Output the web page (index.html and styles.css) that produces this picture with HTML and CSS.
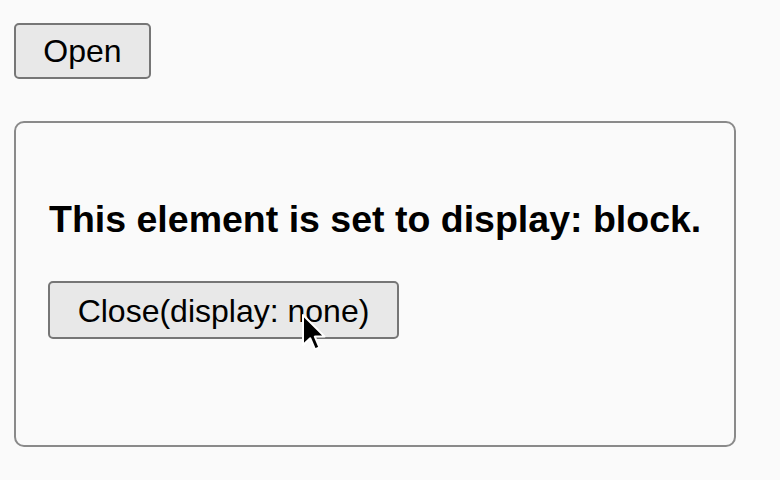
FILE: index.html
```html
<!DOCTYPE html>
<html lang="en">
<head>
<meta charset="utf-8">
<title>Display demo</title>
<link rel="stylesheet" href="styles.css">
</head>
<body>
<div class="page">
  <div class="toolbar">
    <button class="btn btn-open" type="button">Open</button>
  </div>
  <div class="panel">
    <h3 class="panel-title">This element is set to display: block.</h3>
    <button class="btn btn-close" type="button">Close(display: none)</button>
  </div>
</div>
<svg class="cursor" width="26" height="40" viewBox="0 0 13 20" aria-hidden="true">
  <path d="M1 1 L1 16 L4.6 12.6 L7 18.2 L9.2 17.2 L6.9 11.8 L11.8 11.8 Z" fill="#000" stroke="#fff" stroke-width="1" stroke-linejoin="round"/>
</svg>
</body>
</html>
```
FILE: styles.css
```css
html, body {
  margin: 0;
  padding: 0;
  background: #fafafa;
}
body {
  font-family: "Liberation Sans", Arial, Helvetica, sans-serif;
  color: #000;
  width: 780px;
  height: 480px;
  overflow: hidden;
  position: relative;
}
.page {
  padding: 23px 0 0 14px;
}
.toolbar {
  display: flex;
}
.btn {
  font-family: "Liberation Sans", Arial, Helvetica, sans-serif;
  font-size: 32px;
  line-height: 36px;
  color: #000;
  background: #e8e8e8;
  border: 2px solid #767676;
  border-radius: 5px;
  padding: 0;
  display: flex;
  align-items: center;
  justify-content: center;
  box-sizing: border-box;
}
.btn-open {
  width: 137px;
  height: 56px;
}
.panel {
  margin-top: 42px;
  width: 722px;
  height: 326px;
  box-sizing: border-box;
  border: 2px solid #8a8a8a;
  border-radius: 10px;
  padding: 75px 0 0 32px;
}
.panel-title {
  margin: 0 0 40px 1px;
  font-size: 37.5px;
  line-height: 43px;
  font-weight: bold;
}
.btn-close {
  width: 351px;
  height: 58px;
  padding-top: 1px;
}
.cursor {
  position: absolute;
  left: 301px;
  top: 313px;
}
```
